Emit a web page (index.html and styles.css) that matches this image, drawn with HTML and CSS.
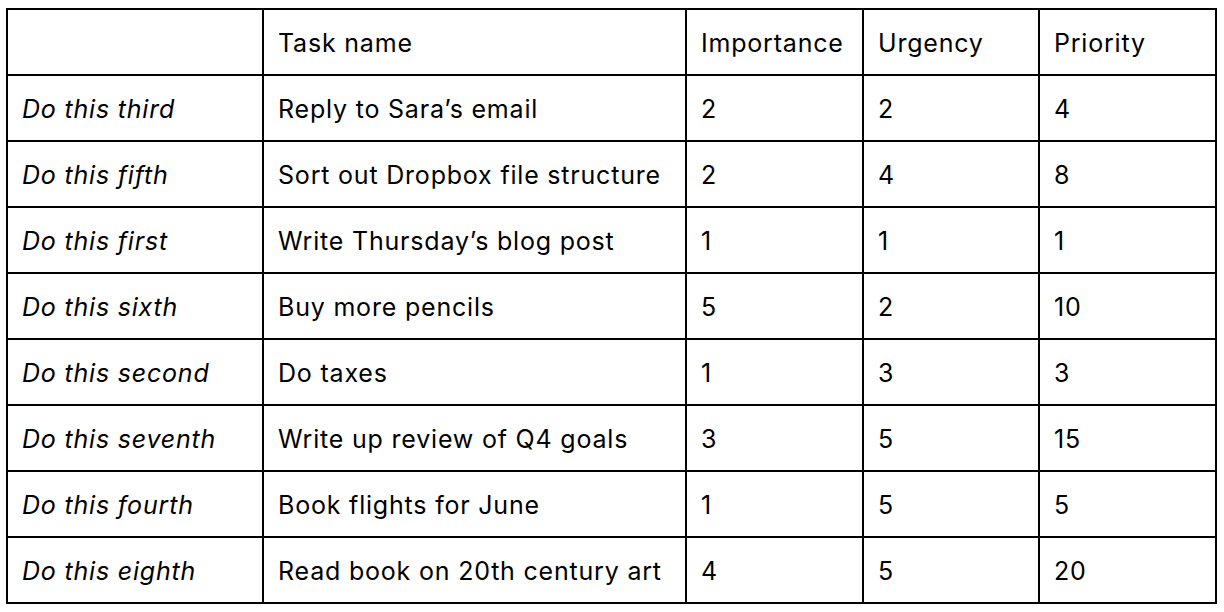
FILE: index.html
```html
<!DOCTYPE html>
<html>
<head>
<meta charset="utf-8">
<link rel="stylesheet" href="styles.css">
</head>
<body>
<table class="tasks">
  <colgroup>
    <col class="c-label">
    <col class="c-name">
    <col class="c-imp">
    <col class="c-urg">
    <col class="c-pri">
  </colgroup>
  <tr><td></td><td>Task name</td><td>Importance</td><td>Urgency</td><td>Priority</td></tr>
  <tr><td class="order">Do this third</td><td>Reply to Sara’s email</td><td>2</td><td>2</td><td>4</td></tr>
  <tr><td class="order">Do this fifth</td><td>Sort out Dropbox file structure</td><td>2</td><td>4</td><td>8</td></tr>
  <tr><td class="order">Do this first</td><td>Write Thursday’s blog post</td><td>1</td><td>1</td><td>1</td></tr>
  <tr><td class="order">Do this sixth</td><td>Buy more pencils</td><td>5</td><td>2</td><td>10</td></tr>
  <tr><td class="order">Do this second</td><td>Do taxes</td><td>1</td><td>3</td><td>3</td></tr>
  <tr><td class="order">Do this seventh</td><td>Write up review of Q4 goals</td><td>3</td><td>5</td><td>15</td></tr>
  <tr><td class="order">Do this fourth</td><td>Book flights for June</td><td>1</td><td>5</td><td>5</td></tr>
  <tr><td class="order">Do this eighth</td><td>Read book on 20th century art</td><td>4</td><td>5</td><td>20</td></tr>
</table>
</body>
</html>
```
FILE: styles.css
```css
html, body {
  background: #ffffff;
}
body {
  margin: 8px 0 0 6px;
  font-family: Inter, "Open Sans", sans-serif;
  color: #000;
}
.tasks {
  border-collapse: collapse;
  table-layout: fixed;
  width: 1209px;
}
.c-label { width: 256px; }
.c-name { width: 423px; }
.c-imp { width: 177px; }
.c-urg { width: 176px; }
.c-pri { width: 177px; }
.tasks td {
  border: 2px solid #000;
  height: 62px;
  padding: 2px 0 0 14px;
  font-size: 25px;
  letter-spacing: 0.8px;
  line-height: 28px;
  vertical-align: middle;
  white-space: nowrap;
}
.tasks td.order {
  font-style: italic;
}
```
